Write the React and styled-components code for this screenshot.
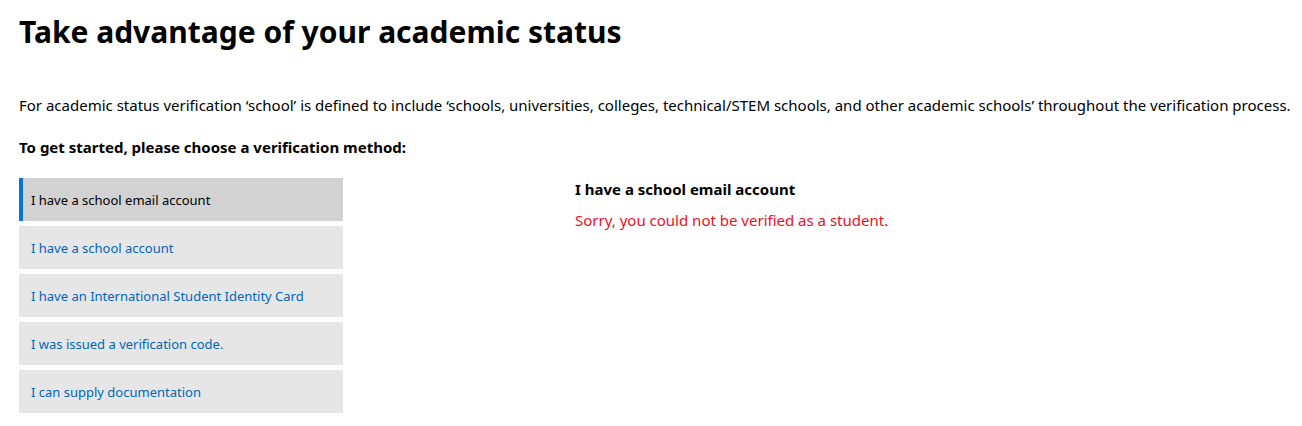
import React from "react";
import styled, { createGlobalStyle } from "styled-components";

const GlobalStyle = createGlobalStyle`
  body {
    margin: 0;
    background: #fff;
    font-family: "Noto Sans", "Open Sans", sans-serif;
    color: #000;
  }
`;

const methods = [
  "I have a school email account",
  "I have a school account",
  "I have an International Student Identity Card",
  "I was issued a verification code.",
  "I can supply documentation",
];

const App = () => {
  const selected = 0;
  return (
    <Page>
      <GlobalStyle />
      <Title>Take advantage of your academic status</Title>
      <Intro>
        For academic status verification ‘school’ is defined to include ‘schools,
        universities, colleges, technical/STEM schools, and other academic schools’
        throughout the verification process.
      </Intro>
      <Prompt>To get started, please choose a verification method:</Prompt>

      <Columns>
        <MethodList>
          {methods.map((m, i) => (
            <MethodItem key={m} $active={i === selected}>
              {m}
            </MethodItem>
          ))}
        </MethodList>

        <Detail>
          <DetailTitle>{methods[selected]}</DetailTitle>
          <ErrorText>Sorry, you could not be verified as a student.</ErrorText>
        </Detail>
      </Columns>
    </Page>
  );
};

const Page = styled.div`
  padding: 12px 0 0 19px;
  white-space: nowrap;
`;

const Title = styled.h1`
  margin: 0;
  font-size: 30px;
  line-height: 40px;
  font-weight: 700;
  color: #000;
`;

const Intro = styled.p`
  margin: 43px 0 0;
  font-size: 15px;
  line-height: 20px;
  color: #000;
`;

const Prompt = styled.p`
  margin: 22px 0 0;
  font-size: 15px;
  line-height: 20px;
  font-weight: 700;
`;

const Columns = styled.div`
  display: flex;
  align-items: flex-start;
  margin-top: 21px;
`;

const MethodList = styled.div`
  display: flex;
  flex-direction: column;
  gap: 5px;
  width: 324px;
`;

const MethodItem = styled.div`
  display: flex;
  align-items: center;
  height: 43px;
  box-sizing: border-box;
  padding-left: ${(p) => (p.$active ? "8px" : "12px")};
  border-left: ${(p) => (p.$active ? "4px solid #0078d4" : "none")};
  background: ${(p) => (p.$active ? "#d2d2d2" : "#e6e6e6")};
  color: ${(p) => (p.$active ? "#000" : "#0067b8")};
  font-size: 13px;
  line-height: 18px;
  cursor: pointer;
`;

const Detail = styled.div`
  margin-left: 232px;
  padding-top: 1px;
`;

const DetailTitle = styled.div`
  font-size: 15px;
  line-height: 20px;
  font-weight: 700;
`;

const ErrorText = styled.div`
  margin-top: 11px;
  font-size: 15px;
  line-height: 20px;
  color: #e81123;
`;

export default App;
